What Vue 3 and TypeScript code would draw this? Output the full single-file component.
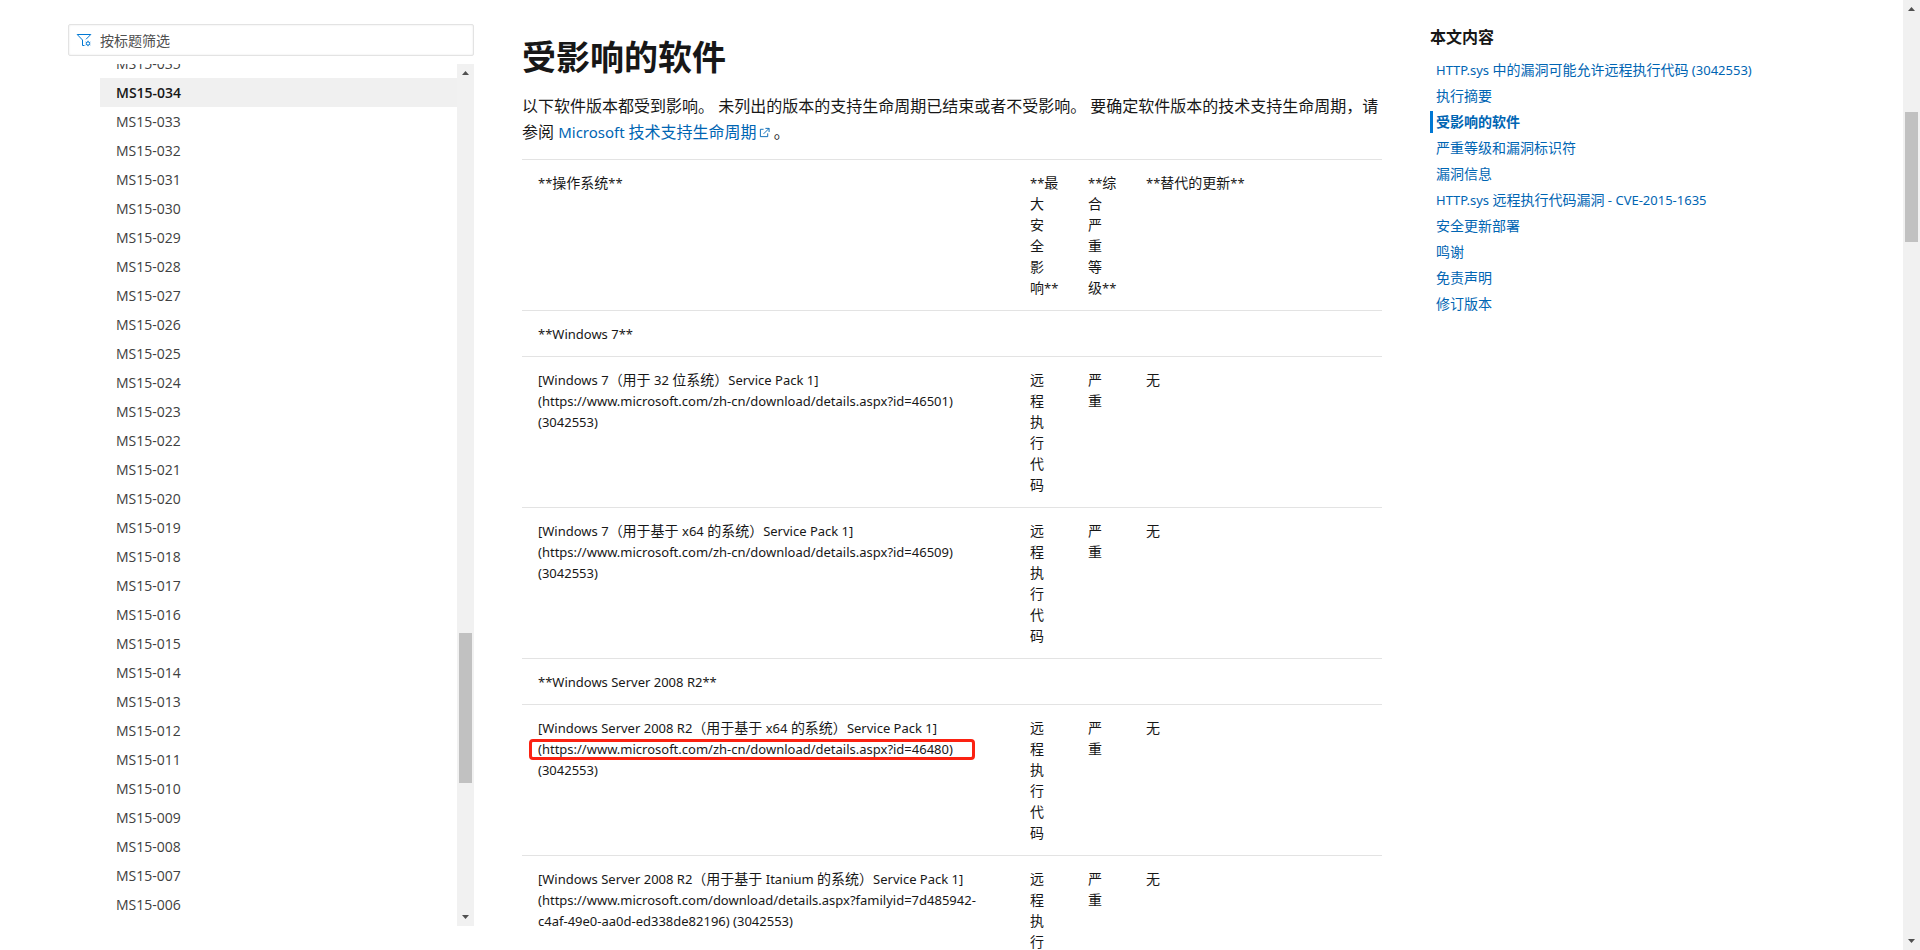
<script setup lang="ts">
import { computed, h, onMounted, ref, type FunctionalComponent } from 'vue'

interface Row {
  system: string[]
  marked?: number
  impact?: string
  rating?: string
  replaced?: string
}

interface Bar {
  before: number
  thumb: number
  after: number
}

// Latin runs are set one step smaller than the Chinese text around them.
const MixedText: FunctionalComponent<{ text: string }> = (props) =>
  props.text
    .split(/([\u0020-\u00ff]+)/)
    .filter((part) => part.length > 0)
    .map((part) => (/^[\u0020-\u00ff]/.test(part) ? h('span', { class: 'latin' }, part) : part))
MixedText.props = ['text']

const filter = ref('')
const current = 'MS15-034'
const bulletins = Array.from({ length: 31 }, (_, i) => `MS15-${String(35 - i).padStart(3, '0')}`)
const shown = computed(() =>
  bulletins.filter((name) => name.toLowerCase().includes(filter.value.trim().toLowerCase())),
)

const list = ref<HTMLElement | null>(null)
onMounted(() => {
  if (list.value) list.value.scrollTop = 15
})

const sideBar: Bar = { before: 552, thumb: 150, after: 126 }
const pageBar: Bar = { before: 95, thumb: 130, after: 691 }

const headers = [
  '**操作系统**',
  '**最\n大\n安\n全\n影\n响**',
  '**综\n合\n严\n重\n等\n级**',
  '**替代的更新**',
]

const rce = { impact: '远程执行代码', rating: '严重', replaced: '无' }
const rows: Row[] = [
  { system: ['**Windows 7**'] },
  {
    system: [
      '[Windows 7（用于 32 位系统）Service Pack 1]',
      '(https://www.microsoft.com/zh-cn/download/details.aspx?id=46501)',
      '(3042553)',
    ],
    ...rce,
  },
  {
    system: [
      '[Windows 7（用于基于 x64 的系统）Service Pack 1]',
      '(https://www.microsoft.com/zh-cn/download/details.aspx?id=46509)',
      '(3042553)',
    ],
    ...rce,
  },
  { system: ['**Windows Server 2008 R2**'] },
  {
    system: [
      '[Windows Server 2008 R2（用于基于 x64 的系统）Service Pack 1]',
      '(https://www.microsoft.com/zh-cn/download/details.aspx?id=46480)',
      '(3042553)',
    ],
    marked: 1,
    ...rce,
  },
  {
    system: [
      '[Windows Server 2008 R2（用于基于 Itanium 的系统）Service Pack 1]',
      '(https://www.microsoft.com/download/details.aspx?familyid=7d485942-',
      'c4af-49e0-aa0d-ed338de82196) (3042553)',
    ],
    ...rce,
  },
]

const activeSection = '受影响的软件'
const sections = [
  'HTTP.sys 中的漏洞可能允许远程执行代码 (3042553)',
  '执行摘要',
  '受影响的软件',
  '严重等级和漏洞标识符',
  '漏洞信息',
  'HTTP.sys 远程执行代码漏洞 - CVE-2015-1635',
  '安全更新部署',
  '鸣谢',
  '免责声明',
  '修订版本',
]
</script>

<template>
  <div class="page" lang="zh-CN">
    <div class="columns">
      <aside class="sidebar">
        <label class="filter">
          <svg class="filter-icon" viewBox="0 0 16 16" aria-hidden="true">
            <path d="M8.500 13.500H6.500V8L1.200 2.500h13.600L10 7.300" />
            <circle cx="12" cy="11.500" r="1.700" />
            <path d="M12 8.800v1M12 13.200v1M9.700 10.100l.8.5M13.500 12.400l.8.5M9.700 12.900l.8-.5M13.500 10.600l.8-.5" />
          </svg>
          <input v-model="filter" type="text" placeholder="按标题筛选" aria-label="按标题筛选" />
        </label>
        <div class="tree">
          <ul ref="list" class="tree-list">
            <li v-for="name in shown" :key="name">
              <a href="#" :class="{ selected: name === current }">{{ name }}</a>
            </li>
          </ul>
          <div class="scrollbar">
            <svg viewBox="0 0 17 17"><path d="M5 11h7L8.500 7z" /></svg>
            <div :style="{ flexGrow: sideBar.before }"></div>
            <div class="thumb" :style="{ flexGrow: sideBar.thumb }"></div>
            <div :style="{ flexGrow: sideBar.after }"></div>
            <svg viewBox="0 0 17 17"><path d="M5 6h7L8.500 10z" /></svg>
          </div>
        </div>
      </aside>

      <main class="article">
        <h1>受影响的软件</h1>
        <p>
          以下软件版本都受到影响。 未列出的版本的支持生命周期已结束或者不受影响。 要确定软件版本的技术支持生命周期，请参阅
          <a href="#"><MixedText text="Microsoft 技术支持生命周期" /><svg class="external" viewBox="0 0 12 12" aria-hidden="true">
            <path d="M5 2.500H1.500v8h8V7M7 1.500h4v4M11 1.500 5 7.500" />
          </svg></a>
          。
        </p>
        <table>
          <colgroup>
            <col />
            <col class="narrow" />
            <col class="narrow" />
            <col class="last" />
          </colgroup>
          <thead>
            <tr>
              <th v-for="text in headers" :key="text" scope="col"><MixedText :text="text" /></th>
            </tr>
          </thead>
          <tbody>
            <tr v-for="row in rows" :key="row.system[0]">
              <td>
                <span
                  v-for="(line, i) in row.system"
                  :key="i"
                  class="line"
                  :class="{ marked: row.marked === i }"
                  ><MixedText :text="line"
                /></span>
              </td>
              <td>{{ row.impact }}</td>
              <td>{{ row.rating }}</td>
              <td>{{ row.replaced }}</td>
            </tr>
          </tbody>
        </table>
      </main>

      <nav class="toc" aria-labelledby="toc-title">
        <h2 id="toc-title">本文内容</h2>
        <ul>
          <li v-for="text in sections" :key="text" :class="{ active: text === activeSection }">
            <a href="#"><MixedText :text="text" /></a>
          </li>
        </ul>
      </nav>
    </div>

    <div class="scrollbar">
      <svg viewBox="0 0 17 17"><path d="M5 11h7L8.500 7z" /></svg>
      <div :style="{ flexGrow: pageBar.before }"></div>
      <div class="thumb" :style="{ flexGrow: pageBar.thumb }"></div>
      <div :style="{ flexGrow: pageBar.after }"></div>
      <svg viewBox="0 0 17 17"><path d="M5 6h7L8.500 10z" /></svg>
    </div>
  </div>
</template>

<style>
body {
  margin: 0;
  background: #fff;
}

.latin {
  font-family: 'Noto Sans', sans-serif;
  font-size: 13px;
  line-height: 1;
}

p .latin {
  font-size: 15px;
}
</style>

<style scoped>
.page {
  display: flex;
  height: 100vh;
  overflow: hidden;
  color: #171717;
  font-family: 'Open Sans', 'Noto Sans CJK SC', sans-serif;
  font-size: 14px;
  line-height: 21px;
}

.columns {
  display: grid;
  flex: 1;
  grid-template-columns: minmax(0, 406fr) minmax(0, 860fr) minmax(0, 405fr);
  gap: 48px;
  min-width: 0;
  padding: 0 68px;
}

a {
  color: #0065b3;
  text-decoration: none;
}

ul {
  margin: 0;
  padding: 0;
  list-style: none;
}

.sidebar {
  display: flex;
  flex-direction: column;
  gap: 8px;
  box-sizing: border-box;
  height: 100vh;
  padding: 24px 0;
}

.filter {
  display: flex;
  align-items: center;
  gap: 8px;
  box-sizing: border-box;
  height: 32px;
  padding: 0 7px;
  border: 1px solid #e3e3e3;
  border-radius: 2px;
  box-shadow: inset 0 0 2px #e3e3e3;
}

.filter-icon {
  width: 16px;
  height: 16px;
  fill: none;
  stroke: #0078d4;
}

.filter input {
  flex: 1;
  min-width: 0;
  padding: 0;
  border: 0;
  outline: 0;
  background: transparent;
  color: #171717;
  font: inherit;
}

.filter input::placeholder {
  color: #505050;
  opacity: 1;
}

.tree {
  display: flex;
  flex: 1;
  min-height: 0;
}

.tree-list {
  flex: 1;
  overflow-y: auto;
  padding-left: 32px;
  scrollbar-width: none;
}

.tree-list a {
  display: block;
  padding: 4px 16px;
  color: #404040;
}

.tree-list a.selected {
  background: #f0f0f0;
  color: #171717;
  font-weight: 600;
}

.scrollbar {
  display: flex;
  flex-direction: column;
  flex: none;
  width: 17px;
  background: #f1f1f1;
}

.scrollbar svg {
  flex: none;
  width: 17px;
  height: 17px;
  fill: #505050;
}

.thumb {
  margin: 0 2px;
  background: #c1c1c1;
}

.article {
  padding-top: 35px;
}

h1 {
  margin: 0 0 14px;
  font-size: 34px;
  line-height: 44px;
}

.article p {
  margin: 0 0 14px;
  font-size: 16px;
  line-height: 26px;
}

.external {
  width: 11px;
  height: 11px;
  margin-left: 2px;
  fill: none;
  stroke: currentColor;
}

table {
  width: 100%;
  border-collapse: collapse;
  table-layout: fixed;
}

.narrow {
  width: 58px;
}

.last {
  width: 252px;
}

th,
td {
  padding: 12px 16px;
  border-top: 1px solid #e3e3e3;
  font-weight: 400;
  text-align: left;
  vertical-align: top;
}

th {
  white-space: pre;
}

.line {
  display: block;
  width: fit-content;
}

.marked {
  position: relative;
}

.marked::after {
  position: absolute;
  inset: 1px -22px -1px -9px;
  border: 3px solid #fb2212;
  border-radius: 4px;
  content: '';
}

.toc {
  padding-top: 24px;
}

.toc h2 {
  margin: 0 0 9px;
  font-size: 16px;
  font-weight: 600;
  line-height: 26px;
}

.toc li {
  margin-bottom: 4px;
  padding-left: 3px;
  border-left: 3px solid transparent;
  line-height: 22px;
}

.toc li.active {
  border-color: #0078d4;
  font-weight: 600;
}
</style>
